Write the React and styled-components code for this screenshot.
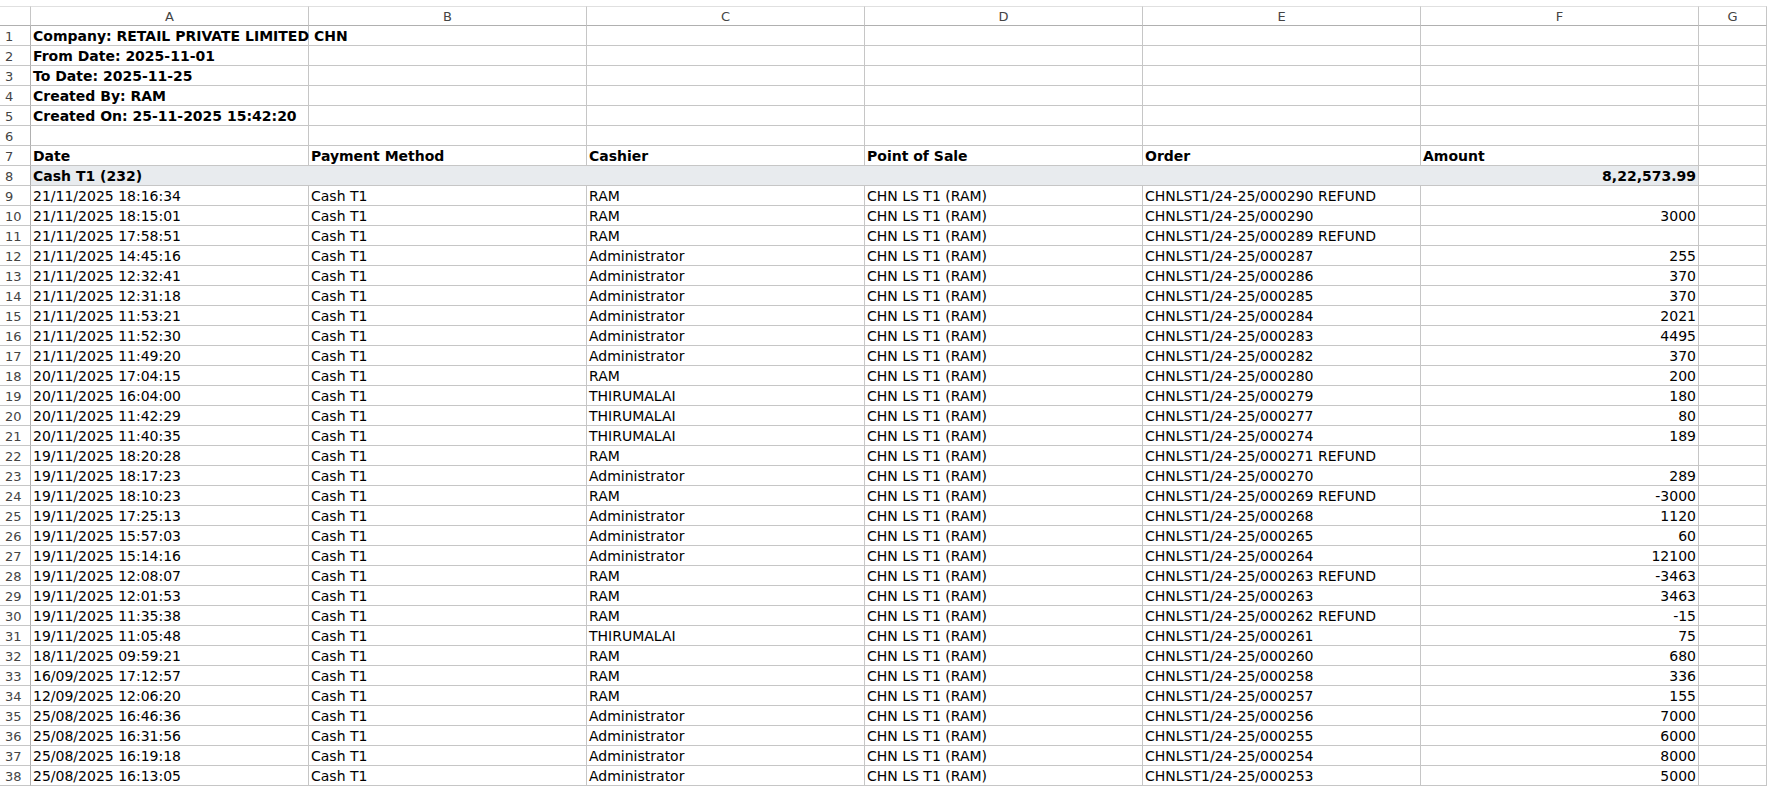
import React from "react";
import styled, { createGlobalStyle } from "styled-components";

const G = createGlobalStyle`
  body{margin:0;background:#fff;font-family:"DejaVu Sans",sans-serif;overflow:hidden;}
`;
const Sheet = styled.div`
  padding-top:6px;
  display:grid;
  grid-template-columns:31px repeat(6,278px) 1fr;
  grid-auto-rows:20px;
`;
const ColHead = styled.div`
  border-right:1px solid #c6c6c6;border-bottom:1px solid #b0b0b0;border-top:1px solid #e0e0e0;
  display:flex;align-items:center;justify-content:center;
  font-size:13px;color:#444;background:#fff;box-sizing:border-box;
`;
const RowNum = styled.div`
  border-right:1px solid #b0b0b0;border-bottom:1px solid #c6c6c6;
  font-size:13px;color:#444;padding-left:5px;display:flex;align-items:flex-end;padding-bottom:1px;box-sizing:border-box;
`;
const Cell = styled.div`
  border-right:1px solid #c6c6c6;border-bottom:1px solid #c6c6c6;box-sizing:border-box;
  font-size:14px;line-height:18px;padding:1px 2px 0;white-space:nowrap;overflow:visible;color:#000;
  font-weight:${p=>p.$b?"bold":"normal"};
  text-align:${p=>p.$r?"right":"left"};
  background:${p=>p.$g?"#e8ebee":"transparent"};
  ${p=>p.$g?"border-right-color:#e8ebee;":""}
  ${p=>p.$span?`grid-column:span ${p.$span};border-right-color:#c6c6c6;`:""}
  position:relative;z-index:${p=>p.$over?1:0};
`;

const rows = [
["21/11/2025 18:16:34","RAM","CHNLST1/24-25/000290 REFUND",""],
["21/11/2025 18:15:01","RAM","CHNLST1/24-25/000290","3000"],
["21/11/2025 17:58:51","RAM","CHNLST1/24-25/000289 REFUND",""],
["21/11/2025 14:45:16","Administrator","CHNLST1/24-25/000287","255"],
["21/11/2025 12:32:41","Administrator","CHNLST1/24-25/000286","370"],
["21/11/2025 12:31:18","Administrator","CHNLST1/24-25/000285","370"],
["21/11/2025 11:53:21","Administrator","CHNLST1/24-25/000284","2021"],
["21/11/2025 11:52:30","Administrator","CHNLST1/24-25/000283","4495"],
["21/11/2025 11:49:20","Administrator","CHNLST1/24-25/000282","370"],
["20/11/2025 17:04:15","RAM","CHNLST1/24-25/000280","200"],
["20/11/2025 16:04:00","THIRUMALAI","CHNLST1/24-25/000279","180"],
["20/11/2025 11:42:29","THIRUMALAI","CHNLST1/24-25/000277","80"],
["20/11/2025 11:40:35","THIRUMALAI","CHNLST1/24-25/000274","189"],
["19/11/2025 18:20:28","RAM","CHNLST1/24-25/000271 REFUND",""],
["19/11/2025 18:17:23","Administrator","CHNLST1/24-25/000270","289"],
["19/11/2025 18:10:23","RAM","CHNLST1/24-25/000269 REFUND","-3000"],
["19/11/2025 17:25:13","Administrator","CHNLST1/24-25/000268","1120"],
["19/11/2025 15:57:03","Administrator","CHNLST1/24-25/000265","60"],
["19/11/2025 15:14:16","Administrator","CHNLST1/24-25/000264","12100"],
["19/11/2025 12:08:07","RAM","CHNLST1/24-25/000263 REFUND","-3463"],
["19/11/2025 12:01:53","RAM","CHNLST1/24-25/000263","3463"],
["19/11/2025 11:35:38","RAM","CHNLST1/24-25/000262 REFUND","-15"],
["19/11/2025 11:05:48","THIRUMALAI","CHNLST1/24-25/000261","75"],
["18/11/2025 09:59:21","RAM","CHNLST1/24-25/000260","680"],
["16/09/2025 17:12:57","RAM","CHNLST1/24-25/000258","336"],
["12/09/2025 12:06:20","RAM","CHNLST1/24-25/000257","155"],
["25/08/2025 16:46:36","Administrator","CHNLST1/24-25/000256","7000"],
["25/08/2025 16:31:56","Administrator","CHNLST1/24-25/000255","6000"],
["25/08/2025 16:19:18","Administrator","CHNLST1/24-25/000254","8000"],
["25/08/2025 16:13:05","Administrator","CHNLST1/24-25/000253","5000"],
];

const info = ["Company: RETAIL PRIVATE LIMITED CHN","From Date: 2025-11-01","To Date: 2025-11-25","Created By: RAM","Created On: 25-11-2025 15:42:20",""];

export default function App(){
  const out=[];
  out.push(<ColHead key="h0"/>);
  "ABCDEFG".split("").forEach(c=>out.push(<ColHead key={"h"+c}>{c}</ColHead>));
  info.forEach((t,i)=>{
    out.push(<RowNum key={"n"+i}>{i+1}</RowNum>);
    out.push(<Cell key={"a"+i} $b $over>{t}</Cell>);
    for(let k=0;k<6;k++) out.push(<Cell key={"e"+i+k}/>);
  });
  out.push(<RowNum key="n7">7</RowNum>);
  ["Date","Payment Method","Cashier","Point of Sale","Order","Amount",""].forEach((t,k)=>out.push(<Cell key={"t"+k} $b>{t}</Cell>));
  out.push(<RowNum key="n8">8</RowNum>);
  out.push(<Cell key="g" $b $g $span={6} style={{display:"flex",justifyContent:"space-between"}}><span>Cash T1 (232)</span><span>8,22,573.99</span></Cell>);
  out.push(<Cell key="g7"/>);
  rows.forEach((r,i)=>{
    out.push(<RowNum key={"rn"+i}>{i+9}</RowNum>);
    out.push(<Cell key={"r0"+i}>{r[0]}</Cell>);
    out.push(<Cell key={"r1"+i}>Cash T1</Cell>);
    out.push(<Cell key={"r2"+i}>{r[1]}</Cell>);
    out.push(<Cell key={"r3"+i}>CHN LS T1 (RAM)</Cell>);
    out.push(<Cell key={"r4"+i}>{r[2]}</Cell>);
    out.push(<Cell key={"r5"+i} $r>{r[3]}</Cell>);
    out.push(<Cell key={"r6"+i}/>);
  });
  return <><G/><Sheet>{out}</Sheet></>;
}
